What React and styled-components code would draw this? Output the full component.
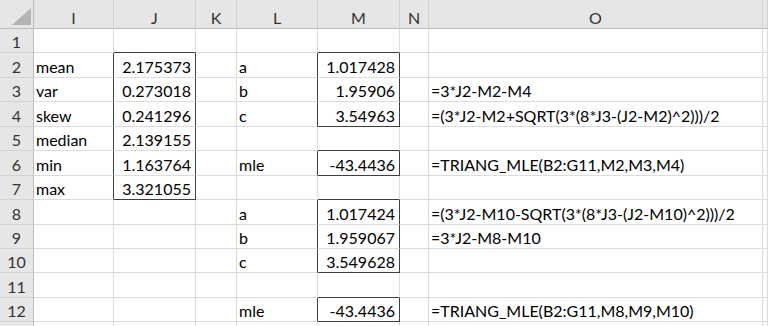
import React from 'react';
import styled, { createGlobalStyle } from 'styled-components';

const GlobalStyle = createGlobalStyle`
  html, body {
    margin: 0;
    padding: 0;
    background: #fff;
    overflow: hidden;
  }
`;

const COLS = ['I', 'J', 'K', 'L', 'M', 'N', 'O', ''];
const ROW_HEIGHTS = [24, 25, 24, 25, 24, 25, 24, 25, 24, 24, 25, 24, 24];

// cell contents keyed by row then column
const DATA = {
  2: { I: 'mean', J: '2.175373', L: 'a', M: '1.017428' },
  3: { I: 'var', J: '0.273018', L: 'b', M: '1.95906', O: '=3*J2-M2-M4' },
  4: { I: 'skew', J: '0.241296', L: 'c', M: '3.54963', O: '=(3*J2-M2+SQRT(3*(8*J3-(J2-M2)^2)))/2' },
  5: { I: 'median', J: '2.139155' },
  6: { I: 'min', J: '1.163764', L: 'mle', M: '-43.4436', O: '=TRIANG_MLE(B2:G11,M2,M3,M4)' },
  7: { I: 'max', J: '3.321055' },
  8: { L: 'a', M: '1.017424', O: '=(3*J2-M10-SQRT(3*(8*J3-(J2-M10)^2)))/2' },
  9: { L: 'b', M: '1.959067', O: '=3*J2-M8-M10' },
  10: { L: 'c', M: '3.549628' },
  12: { L: 'mle', M: '-43.4436', O: '=TRIANG_MLE(B2:G11,M8,M9,M10)' },
};

// outlined ranges (single column each)
const BOXES = [
  { col: 'J', from: 2, to: 7 },
  { col: 'M', from: 2, to: 4 },
  { col: 'M', from: 6, to: 6 },
  { col: 'M', from: 8, to: 10 },
  { col: 'M', from: 12, to: 12 },
];

const inBox = (r, c) => BOXES.find((b) => b.col === c && r >= b.from && r <= b.to);

const Sheet = styled.div`
  display: grid;
  grid-template-columns: 34px 80px 82px 41px 81px 82px 29px 334px 1fr;
  grid-template-rows: 29px ${ROW_HEIGHTS.map((h) => h + 'px').join(' ')};
  width: 768px;
  height: 326px;
  overflow: hidden;
  font-family: Lato, "Liberation Sans", sans-serif;
  font-size: 16px;
  line-height: 20px;
  color: #000;
`;

const Corner = styled.div`
  background: #e6e6e6;
  border-right: 1px solid #bcbcbc;
  border-bottom: 1px solid #bcbcbc;
  display: flex;
  align-items: flex-end;
  justify-content: flex-end;
  padding: 0 2px 3px 0;

  svg {
    display: block;
  }
`;

const ColHeader = styled.div`
  background: #e6e6e6;
  border-right: 1px solid #d2d2d2;
  border-bottom: 1px solid #bcbcbc;
  color: #333;
  display: flex;
  align-items: flex-end;
  justify-content: center;
`;

const RowHeader = styled.div`
  background: #e6e6e6;
  border-right: 1px solid #bcbcbc;
  border-bottom: 1px solid #d2d2d2;
  color: #333;
  display: flex;
  align-items: flex-end;
  justify-content: center;
`;

const Cell = styled.div`
  border-right: 1px solid ${(p) => (p.$darkRight ? '#3f3f3f' : '#dcdcdc')};
  border-bottom: 1px solid ${(p) => (p.$darkBottom ? '#3f3f3f' : '#dcdcdc')};
  display: flex;
  align-items: flex-end;
  justify-content: ${(p) => (p.$numeric ? 'flex-end' : 'flex-start')};
  padding: 0 ${(p) => (p.$numeric ? '4px' : '2px')} 0 ${(p) => (p.$numeric ? '2px' : '2px')};
  white-space: nowrap;
  overflow: visible;
`;

const isNumber = (v) => v !== undefined && /^-?\d/.test(v);

const App = () => {
  const rows = ROW_HEIGHTS.map((_, i) => i + 1);
  return (
    <>
      <GlobalStyle />
      <Sheet>
        <Corner>
          <svg width="19" height="17" viewBox="0 0 19 17">
            <polygon points="19,0 19,17 0,17" fill="#b4b4b4" />
          </svg>
        </Corner>
        {COLS.map((c, i) => (
          <ColHeader key={'h' + i}>{c}</ColHeader>
        ))}

        {rows.map((r) => (
          <React.Fragment key={r}>
            <RowHeader>{r <= 12 ? r : ''}</RowHeader>
            {COLS.map((c, ci) => {
              const value = DATA[r] && DATA[r][c];
              const next = COLS[ci + 1];
              const box = inBox(r, c);
              const darkRight = !!box || !!inBox(r, next);
              const below = inBox(r + 1, c);
              const darkBottom = (box && box.to === r) || (below && below.from === r + 1);
              return (
                <Cell
                  key={c + ci}
                  $numeric={isNumber(value)}
                  $darkRight={darkRight}
                  $darkBottom={!!darkBottom}
                >
                  {value}
                </Cell>
              );
            })}
          </React.Fragment>
        ))}
      </Sheet>
    </>
  );
};

export default App;
